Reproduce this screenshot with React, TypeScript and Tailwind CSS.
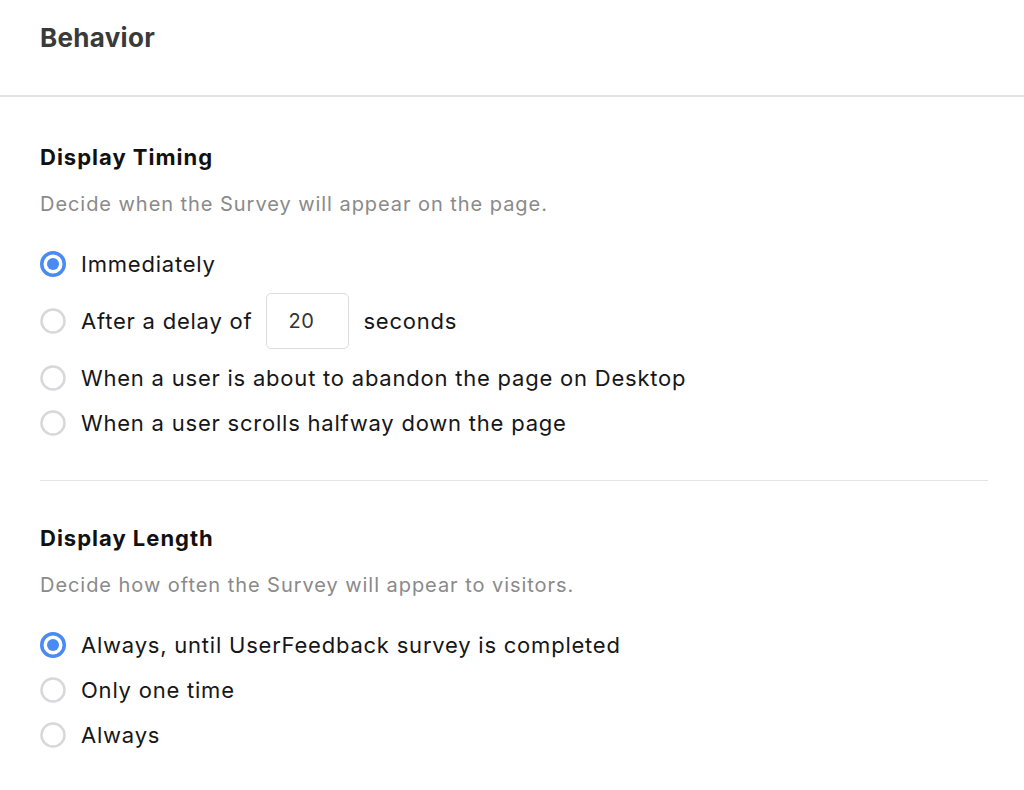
import { useState } from 'react';

// ============================================================================
// Radio
// ============================================================================

function Radio({ checked }: { checked: boolean }) {
  return (
    <svg width="26" height="26" viewBox="0 0 26 26" className="shrink-0">
      {checked ? (
        <>
          <circle cx="13" cy="13" r="11.25" fill="#fff" stroke="#4a8af4" strokeWidth="3.5" />
          <circle cx="13" cy="13" r="6" fill="#4a8af4" />
        </>
      ) : (
        <circle cx="13" cy="13" r="11.5" fill="#fff" stroke="#d8d8db" strokeWidth="2.5" />
      )}
    </svg>
  );
}

interface Option {
  id: string;
  label: React.ReactNode;
}

function RadioGroup({ options, defaultValue }: { options: Option[]; defaultValue: string }) {
  const [value, setValue] = useState(defaultValue);
  return (
    <div className="flex flex-col gap-[11px]">
      {options.map((o) => (
        <label
          key={o.id}
          onClick={() => setValue(o.id)}
          className="flex items-center gap-[15px] cursor-pointer text-[22px] leading-[34px] tracking-[0.78px] text-[#161618]"
        >
          <Radio checked={value === o.id} />
          {o.label}
        </label>
      ))}
    </div>
  );
}

// ============================================================================
// Section
// ============================================================================

function Section({ title, description, children }: { title: string; description: string; children: React.ReactNode }) {
  return (
    <div>
      <h3 className="text-[22px] leading-[28px] font-bold tracking-[1px] text-[#111]">{title}</h3>
      <p className="mt-[19px] text-[20px] leading-[28px] tracking-[0.95px] text-[#8a8a8a]">{description}</p>
      <div className="mt-[29px]">{children}</div>
    </div>
  );
}

export default function App() {
  const timingOptions: Option[] = [
    { id: 'immediately', label: 'Immediately' },
    {
      id: 'delay',
      label: (
        <span className="flex items-center h-[58px]">
          After a delay of
          <input
            defaultValue="20"
            className="mx-[14px] w-[83px] h-[56px] rounded-[5px] border border-[#dcdcdf] pl-[21px] text-[20px] tracking-[0.6px] text-[#333] outline-none"
          />
          seconds
        </span>
      ),
    },
    { id: 'abandon', label: 'When a user is about to abandon the page on Desktop' },
    { id: 'scroll', label: 'When a user scrolls halfway down the page' },
  ];

  const lengthOptions: Option[] = [
    { id: 'until', label: 'Always, until UserFeedback survey is completed' },
    { id: 'once', label: 'Only one time' },
    { id: 'always', label: 'Always' },
  ];

  return (
    <div className="min-h-[790px] bg-white font-['Inter',sans-serif]">
      {/* Header */}
      <div className="h-[97px] border-b-2 border-[#e3e3e3] px-10 pt-5">
        <h2 className="text-[26px] leading-[36px] font-bold tracking-[0.3px] text-[#3a3a3a]">Behavior</h2>
      </div>

      <div className="pl-10 pr-9">
        <div className="pt-[46px] pb-10 border-b border-[#e4e4e6]">
          <Section title="Display Timing" description="Decide when the Survey will appear on the page.">
            <RadioGroup options={timingOptions} defaultValue="immediately" />
          </Section>
        </div>

        <div className="pt-[43px]">
          <Section title="Display Length" description="Decide how often the Survey will appear to visitors.">
            <RadioGroup options={lengthOptions} defaultValue="until" />
          </Section>
        </div>
      </div>
    </div>
  );
}
